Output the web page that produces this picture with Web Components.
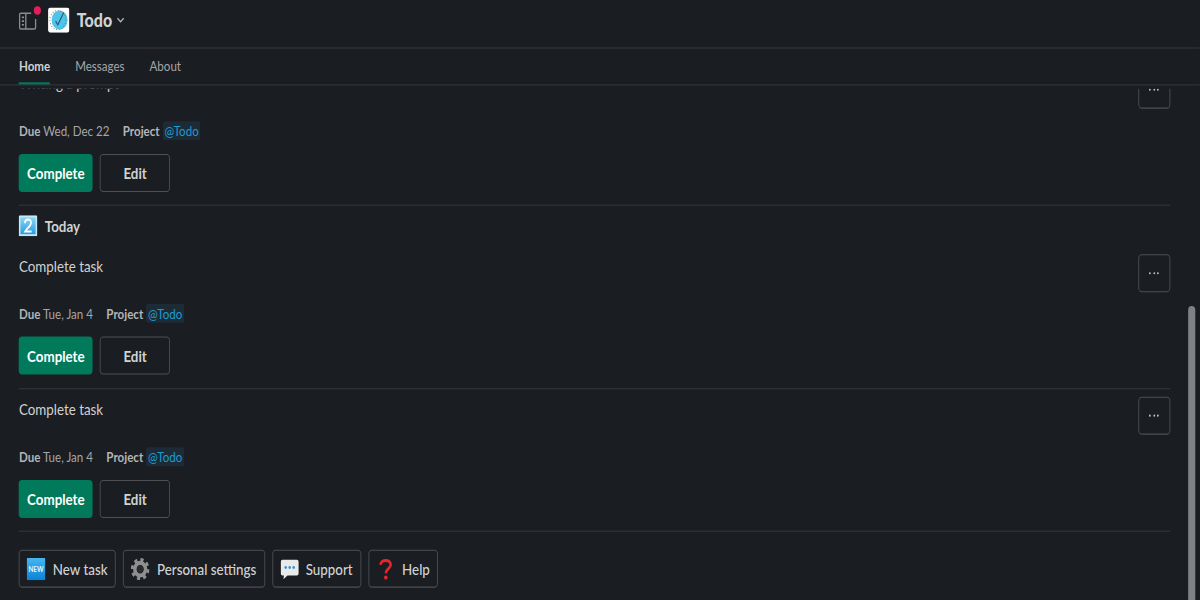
<!DOCTYPE html>
<html>
<head>
<meta charset="utf-8">
<style>
  html, body { margin: 0; height: 100%; background: #1a1d21; overflow: hidden; }
  body { font-family: Lato, "Liberation Sans", sans-serif; color: #d1d2d3; }
</style>
</head>
<body>
<todo-app>
  <app-header slot="header"></app-header>
  <app-tabs slot="tabs"></app-tabs>

  <task-item name="Writing a prompt" due="Wed, Dec 22"></task-item>
  <section-title>
    <svg slot="icon" width="21" height="20" viewBox="0 0 21 20">
      <defs><linearGradient id="k" x1="0" y1="0" x2="0" y2="1"><stop offset="0" stop-color="#8ad6f7"/><stop offset="1" stop-color="#2a9ce0"/></linearGradient></defs>
      <rect width="21" height="20" rx="1.500" fill="#c4e9f9"/>
      <rect x="2" y="2" width="17" height="16" fill="url(#k)"/>
      <path d="M7 7.500c0-4.500 7-4.500 7-.4 0 3-4.500 5-6.800 8.400h7.300" fill="none" stroke="#fff" stroke-width="1.800"/>
    </svg>
    Today
  </section-title>
  <task-item name="Complete task" due="Tue, Jan 4"></task-item>
  <task-item name="Complete task" due="Tue, Jan 4"></task-item>

  <footer-actions>
    <action-button>
      <svg slot="icon" width="21" height="21" viewBox="0 0 21 21">
        <defs><linearGradient id="n" x1="0" y1="0" x2="0" y2="1"><stop offset="0" stop-color="#45b6f2"/><stop offset="1" stop-color="#0a82d6"/></linearGradient></defs>
        <rect width="21" height="21" rx="1" fill="url(#n)"/>
        <text x="10.500" y="13.200" text-anchor="middle" font-family="Lato, sans-serif" font-size="7" font-weight="700" fill="#e8f5fd">NEW</text>
      </svg>
      New task
    </action-button>
    <action-button>
      <svg slot="icon" width="21" height="21" viewBox="0 0 21 21">
        <circle cx="10.500" cy="10.500" r="6" fill="none" stroke="#8e8f8f" stroke-width="4"/>
        <circle cx="10.500" cy="10.500" r="8.800" fill="none" stroke="#8e8f8f" stroke-width="3.400" stroke-dasharray="3.450 3.460"/>
        <circle cx="10.500" cy="10.500" r="3.600" fill="#2b2c2e"/>
      </svg>
      Personal settings
    </action-button>
    <action-button>
      <svg slot="icon" width="21" height="21" viewBox="0 0 21 21">
        <path fill="#e9eaea" d="M2.500 1.500h16a2 2 0 0 1 2 2v11a2 2 0 0 1-2 2H8l-4.500 3.500.5-3.500H2.500a2 2 0 0 1-2-2v-11a2 2 0 0 1 2-2z"/>
        <circle cx="6" cy="9" r="1.400" fill="#2a93e8"/>
        <circle cx="10.500" cy="9" r="1.400" fill="#2a93e8"/>
        <circle cx="15" cy="9" r="1.400" fill="#2a93e8"/>
      </svg>
      Support
    </action-button>
    <action-button>
      <svg slot="icon" width="21" height="21" viewBox="0 0 21 21">
        <path fill="none" stroke="#e8262d" stroke-width="2.800" d="M4.500 6.500C5 .8 16 .8 16 6.300c0 4-5.500 3.700-5.500 8"/>
        <circle cx="10.500" cy="18.500" r="2" fill="#e8262d"/>
      </svg>
      Help
    </action-button>
  </footer-actions>
</todo-app>

<script>
class TodoApp extends HTMLElement {
  constructor() {
    super();
    this.shadowDOM = this.attachShadow({ mode: 'open' });
    this.shadowDOM.innerHTML = `
    <style>
      :host { display: block; width: 1200px; height: 600px; overflow: hidden; }
      /* the reference is a squeezed capture, so lay out at its real size and scale */
      .frame { display: flex; flex-direction: column; position: relative; width: 1348px; height: 568.7px; transform: scale(.89, 1.055); transform-origin: 0 0; }
      .list { flex: 1; min-height: 0; overflow: hidden; clip-path: inset(3.500px 0 0 0); display: flex; flex-direction: column; justify-content: flex-end; padding: 0 33.400px 0 21.300px; }
      .thumb { position: absolute; right: 5.300px; bottom: 0; width: 8.200px; height: 279px; background: #7f8184; border-radius: 4px 4px 0 0; }
    </style>
    <div class="frame">
      <slot name="header"></slot>
      <slot name="tabs"></slot>
      <div class="list"><slot></slot></div>
      <div class="thumb"></div>
    </div>
    `;
  }
}

class AppHeader extends HTMLElement {
  constructor() {
    super();
    this.shadowDOM = this.attachShadow({ mode: 'open' });
    this.shadowDOM.innerHTML = `
    <style>
      :host { display: flex; align-items: center; box-sizing: border-box; height: 45.550px; padding: 0 0 6.500px 21.300px; border-bottom: 1px solid #35373b; flex: none; }
      .side { position: relative; width: 21px; height: 18px; margin: 2px 12px 0 0; }
      .dot { position: absolute; left: 17px; top: -5px; width: 8px; height: 8px; border-radius: 50%; background: #e01e5a; }
      .logo { margin-right: 8px; display: block; }
      .title { font-size: 18px; font-weight: 900; color: #d1d2d3; }
      .chev { margin-left: 5px; }
    </style>
    <div class="side">
      <svg width="21" height="18" viewBox="0 0 21 18" style="display:block">
        <path fill="none" stroke="#8b8c8e" stroke-width="1.500" d="M14 1.500H2.500a1.500 1.500 0 0 0-1.500 1.500v12a1.500 1.500 0 0 0 1.500 1.500h15a1.500 1.500 0 0 0 1.500-1.500V7M8 1.500v15"/>
        <path stroke="#8b8c8e" stroke-width="1.500" d="M3.500 5.500h2.500M3.500 9h2.500M3.500 12.500h2.500"/>
      </svg>
      <span class="dot"></span>
    </div>
    <svg class="logo" width="24" height="24" viewBox="0 0 24 24">
      <rect width="24" height="24" rx="3" fill="#fff"/>
      <circle cx="13" cy="12" r="9" fill="#4fc3e8"/>
      <circle cx="11" cy="12" r="9" fill="none" stroke="#77797c" stroke-width="1" stroke-dasharray="1 2"/>
      <path d="M8.500 13l2.500 3.500L17.500 5" fill="none" stroke="#245a78" stroke-width="1.200"/>
    </svg>
    <span class="title">Todo</span>
    <svg class="chev" width="9" height="6" viewBox="0 0 9 6"><path d="M1 1.200l3.500 3.500L8 1.200" fill="none" stroke="#b9babb" stroke-width="1.300"/></svg>
    `;
  }
}

class AppTabs extends HTMLElement {
  constructor() {
    super();
    this.shadowDOM = this.attachShadow({ mode: 'open' });
    this.shadowDOM.innerHTML = `
    <style>
      :host { display: flex; gap: 28px; height: 34px; padding-left: 21.300px; border-bottom: 1px solid #35373b; font-size: 13px; color: #a5a6a8; flex: none; }
      span { display: flex; align-items: center; height: 34px; box-sizing: border-box; padding-bottom: 2px; }
      .on { color: #d1d2d3; font-weight: 700; padding-bottom: 0; border-bottom: 2px solid #007a5a; }
    </style>
    <span class="on">Home</span><span>Messages</span><span>About</span>
    `;
  }
}

class SectionTitle extends HTMLElement {
  constructor() {
    super();
    this.shadowDOM = this.attachShadow({ mode: 'open' });
    this.shadowDOM.innerHTML = `
    <style>
      :host { display: flex; align-items: center; gap: 8px; height: 37.900px; box-sizing: border-box; flex: none; font-size: 15px; font-weight: 700; color: #d1d2d3; }
    </style>
    <slot name="icon"></slot><slot></slot>
    `;
  }
}

class TaskItem extends HTMLElement {
  constructor() {
    super();
    this.shadowDOM = this.attachShadow({ mode: 'open' });
  }

  connectedCallback() {
    const name = this.getAttribute('name');
    const due = this.getAttribute('due');
    this.shadowDOM.innerHTML = `
    <style>
      :host { display: block; box-sizing: border-box; height: 135.500px; flex: none; padding-top: 7.550px; border-bottom: 1px solid #35373b; }
      .top { display: flex; justify-content: space-between; height: 36px; }
      .name { font-size: 15px; line-height: 22px; color: #d1d2d3; }
      .more { box-sizing: border-box; width: 36px; height: 36px; border: 1px solid #4e5053; border-radius: 4px; display: flex; align-items: center; justify-content: center; gap: 2.500px; }
      .more i { width: 2.200px; height: 2.200px; background: #c4c5c6; border-radius: 50%; }
      .meta { display: flex; gap: 15px; align-items: center; height: 18px; margin-top: 11.500px; font-size: 13px; color: #a5a6a8; }
      .meta b { color: #b4b5b7; font-weight: 700; }
      .mention { color: #1d9bd1; background: #1c2b36; border-radius: 3px; padding: 1px 2px; }
      .actions { display: flex; gap: 8px; margin-top: 13.200px; }
      .btn { box-sizing: border-box; height: 36px; border-radius: 4px; display: flex; align-items: center; justify-content: center; font-size: 15px; font-weight: 700; }
      .go { width: 83px; background: #007a5a; color: #fff; }
      .edit { width: 79px; border: 1px solid #4e5053; color: #d1d2d3; }
    </style>
    <div class="top">
      <div class="name">${name}</div>
      <div class="more"><i></i><i></i><i></i></div>
    </div>
    <div class="meta">
      <span><b>Due</b> ${due}</span>
      <span><b>Project</b> <span class="mention">@Todo</span></span>
    </div>
    <div class="actions">
      <div class="btn go">Complete</div>
      <div class="btn edit">Edit</div>
    </div>
    `;
  }
}

class FooterActions extends HTMLElement {
  constructor() {
    super();
    this.shadowDOM = this.attachShadow({ mode: 'open' });
    this.shadowDOM.innerHTML = `
    <style>
      :host { display: flex; gap: 8px; padding: 17px 0 11.500px; flex: none; }
    </style>
    <slot></slot>
    `;
  }
}

class ActionButton extends HTMLElement {
  constructor() {
    super();
    this.shadowDOM = this.attachShadow({ mode: 'open' });
    this.shadowDOM.innerHTML = `
    <style>
      :host { display: flex; align-items: center; gap: 8px; box-sizing: border-box; height: 36px; padding: 0 8.500px 0 8px; border: 1px solid #4e5053; border-radius: 4px; font-size: 15px; font-weight: 500; color: #d1d2d3; }
    </style>
    <slot name="icon"></slot><slot></slot>
    `;
  }
}

customElements.define('todo-app', TodoApp);
customElements.define('app-header', AppHeader);
customElements.define('app-tabs', AppTabs);
customElements.define('section-title', SectionTitle);
customElements.define('task-item', TaskItem);
customElements.define('footer-actions', FooterActions);
customElements.define('action-button', ActionButton);
</script>
</body>
</html>
